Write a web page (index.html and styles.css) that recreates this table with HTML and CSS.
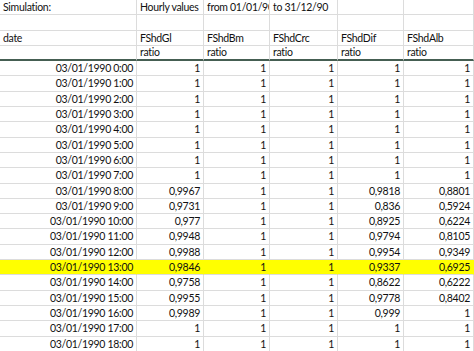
FILE: index.html
```html
<!DOCTYPE html>
<html>
<head>
<meta charset="utf-8">
<link rel="stylesheet" href="styles.css">
</head>
<body>
<div class="sheet">
  <div class="c">Simulation:</div><div class="c">Hourly values</div><div class="c">from 01/01/90</div><div class="c">to 31/12/90</div><div class="c"></div><div class="c"></div>
  <div class="c"></div><div class="c"></div><div class="c"></div><div class="c"></div><div class="c"></div><div class="c"></div>
  <div class="c">date</div><div class="c">FShdGl</div><div class="c">FShdBm</div><div class="c">FShdCrc</div><div class="c">FShdDif</div><div class="c">FShdAlb</div>
  <div class="c hd"></div><div class="c hd">ratio</div><div class="c hd">ratio</div><div class="c hd">ratio</div><div class="c hd">ratio</div><div class="c hd">ratio</div>

  <div class="c n">03/01/1990 0:00</div><div class="c n">1</div><div class="c n">1</div><div class="c n">1</div><div class="c n">1</div><div class="c n">1</div>
  <div class="c n">03/01/1990 1:00</div><div class="c n">1</div><div class="c n">1</div><div class="c n">1</div><div class="c n">1</div><div class="c n">1</div>
  <div class="c n">03/01/1990 2:00</div><div class="c n">1</div><div class="c n">1</div><div class="c n">1</div><div class="c n">1</div><div class="c n">1</div>
  <div class="c n">03/01/1990 3:00</div><div class="c n">1</div><div class="c n">1</div><div class="c n">1</div><div class="c n">1</div><div class="c n">1</div>
  <div class="c n">03/01/1990 4:00</div><div class="c n">1</div><div class="c n">1</div><div class="c n">1</div><div class="c n">1</div><div class="c n">1</div>
  <div class="c n">03/01/1990 5:00</div><div class="c n">1</div><div class="c n">1</div><div class="c n">1</div><div class="c n">1</div><div class="c n">1</div>
  <div class="c n">03/01/1990 6:00</div><div class="c n">1</div><div class="c n">1</div><div class="c n">1</div><div class="c n">1</div><div class="c n">1</div>
  <div class="c n">03/01/1990 7:00</div><div class="c n">1</div><div class="c n">1</div><div class="c n">1</div><div class="c n">1</div><div class="c n">1</div>
  <div class="c n">03/01/1990 8:00</div><div class="c n">0,9967</div><div class="c n">1</div><div class="c n">1</div><div class="c n">0,9818</div><div class="c n">0,8801</div>
  <div class="c n">03/01/1990 9:00</div><div class="c n">0,9731</div><div class="c n">1</div><div class="c n">1</div><div class="c n">0,836</div><div class="c n">0,5924</div>
  <div class="c n">03/01/1990 10:00</div><div class="c n">0,977</div><div class="c n">1</div><div class="c n">1</div><div class="c n">0,8925</div><div class="c n">0,6224</div>
  <div class="c n">03/01/1990 11:00</div><div class="c n">0,9948</div><div class="c n">1</div><div class="c n">1</div><div class="c n">0,9794</div><div class="c n">0,8105</div>
  <div class="c n">03/01/1990 12:00</div><div class="c n">0,9988</div><div class="c n">1</div><div class="c n">1</div><div class="c n">0,9954</div><div class="c n">0,9349</div>
  <div class="c n hl">03/01/1990 13:00</div><div class="c n hl">0,9846</div><div class="c n hl">1</div><div class="c n hl">1</div><div class="c n hl">0,9337</div><div class="c n hl">0,6925</div>
  <div class="c n">03/01/1990 14:00</div><div class="c n">0,9758</div><div class="c n">1</div><div class="c n">1</div><div class="c n">0,8622</div><div class="c n">0,6222</div>
  <div class="c n">03/01/1990 15:00</div><div class="c n">0,9955</div><div class="c n">1</div><div class="c n">1</div><div class="c n">0,9778</div><div class="c n">0,8402</div>
  <div class="c n">03/01/1990 16:00</div><div class="c n">0,9989</div><div class="c n">1</div><div class="c n">1</div><div class="c n">0,999</div><div class="c n">1</div>
  <div class="c n">03/01/1990 17:00</div><div class="c n">1</div><div class="c n">1</div><div class="c n">1</div><div class="c n">1</div><div class="c n">1</div>
  <div class="c n">03/01/1990 18:00</div><div class="c n">1</div><div class="c n">1</div><div class="c n">1</div><div class="c n">1</div><div class="c n">1</div>
</div>
</body>
</html>
```
FILE: styles.css
```css
html, body {
  margin: 0;
  padding: 0;
  background: #ffffff;
  overflow: hidden;
}
.sheet {
  display: grid;
  grid-template-columns: 137px 67px 66px 68px 66px 70px;
  grid-auto-rows: 15.3px;
  font-family: Lato, "Open Sans", sans-serif;
  font-size: 10.5px;
  letter-spacing: -0.3px;
  color: #111111;
}
.c {
  box-sizing: border-box;
  border-right: 1px solid #dcdcdc;
  border-bottom: 1px solid #dcdcdc;
  padding: 0 2px 0 3px;
  line-height: 14px;
  white-space: nowrap;
  overflow: hidden;
}
.c.hd {
  border-bottom: 2px solid #455e52;
  line-height: 13px;
}
.c.n {
  text-align: right;
  padding-right: 3px;
}
.c.hl {
  background: #ffff00;
  border-right-color: #ffff00;
}
```
